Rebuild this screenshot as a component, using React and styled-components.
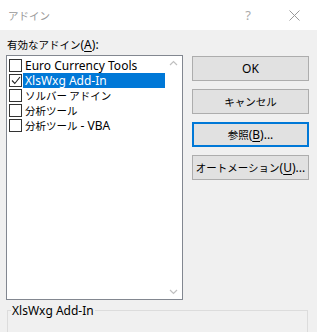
import styled, { createGlobalStyle } from "styled-components";

const Global = createGlobalStyle`
	html, body {
		margin: 0;
		padding: 0;
		background: #f0f0f0;
	}
	body {
		font-family: "Noto Sans", "Noto Sans CJK JP", sans-serif;
		font-size: 12px;
		color: #000;
	}
`

// Japanese glyphs in the original UI font are narrow, so they get a smaller size
const J = styled.span`
	font-family: "Noto Sans CJK JP", sans-serif;
	font-size: 10.5px;
`

const Dialog = styled.div`
	width: 317px;
	height: 332px;
	display: flex;
	flex-direction: column;
	overflow: hidden;
	background: #f0f0f0;
`

const TitleBar = styled.div`
	height: 30px;
	flex: none;
	background: #fff;
	display: flex;
	align-items: center;
	padding-left: 8px;
	color: #999;
	font-size: 12px;
`

const Title = styled.div`
	flex: 1;
`

const TitleButton = styled.div`
	width: 46px;
	height: 30px;
	display: flex;
	align-items: center;
	justify-content: center;
	color: #aaa;
	font-size: 13px;
`

const Body = styled.div`
	flex: 1;
	display: flex;
	flex-direction: column;
	padding: 6px 9px 0 6px;
`

const Label = styled.div`
	height: 18px;
	line-height: 18px;
	padding-left: 1px;
`

const Under = styled.span`
	text-decoration: underline;
	text-underline-offset: 2px;
`

const Main = styled.div`
	display: flex;
	gap: 9px;
	margin-top: 1px;
`

const ListBox = styled.div`
	width: 175px;
	height: 243px;
	border: 1px solid #828790;
	background: #fff;
	display: flex;
	flex: none;
`

const Items = styled.div`
	flex: 1;
	padding-top: 2px;
	padding-left: 2px;
`

const Row = styled.div`
	display: flex;
	align-items: center;
	height: 15px;
	gap: 1px;
`

const Box = styled.div`
	width: 11px;
	height: 11px;
	border: 1px solid #333;
	background: #fff;
	display: flex;
	align-items: center;
	justify-content: center;
	flex: none;
`

const ItemText = styled.div`
	flex: 1;
	height: 15px;
	line-height: 15px;
	padding-left: 2px;
	white-space: nowrap;
	background: ${p => (p.$selected ? "#0078d7" : "transparent")};
	color: ${p => (p.$selected ? "#fff" : "#000")};
`

const ScrollBar = styled.div`
	width: 17px;
	display: flex;
	flex-direction: column;
	justify-content: space-between;
	align-items: center;
	padding: 4px 0;
`

const Buttons = styled.div`
	display: flex;
	flex-direction: column;
	gap: 8px;
	padding-top: 1px;
`

const Button = styled.div`
	width: 117px;
	height: 25px;
	box-sizing: border-box;
	border: ${p => (p.$focused ? "2px solid #0078d7" : "1px solid #adadad")};
	background: #e1e1e1;
	display: flex;
	align-items: center;
	justify-content: center;
	white-space: nowrap;
`

const Group = styled.fieldset`
	margin: 2px 0 0 1px;
	padding: 0;
	width: 301px;
	height: 40px;
	border: 1px solid #dcdcdc;
	border-bottom: none;
	box-sizing: border-box;
`

const Legend = styled.legend`
	padding: 0 1px;
	margin-left: 3px;
	font-size: 12px;
`

const Check = () => (
	<svg width="10" height="9" viewBox="0 0 10 9">
		<path d="M1 4.5 L3.8 7.5 L9 1" fill="none" stroke="#222" strokeWidth="1.1" />
	</svg>
)

const Chevron = ({ up }) => (
	<svg width="9" height="6" viewBox="0 0 9 6">
		<path d={up ? "M1 5 L4.5 1.5 L8 5" : "M1 1 L4.5 4.5 L8 1"} fill="none" stroke="#c0c0c0" strokeWidth="1.2" />
	</svg>
)

const addins = [
	{ key: "euro", name: "Euro Currency Tools", checked: false },
	{ key: "xls", name: "XlsWxg Add-In", checked: true, selected: true },
	{ key: "solver", name: <J>ソルバー アドイン</J>, checked: false },
	{ key: "analysis", name: <J>分析ツール</J>, checked: false },
	{ key: "vba", name: <><J>分析ツール</J> - VBA</>, checked: false },
];

const App = () => {
	return (
		<Dialog>
			<Global />
			<TitleBar>
				<Title><J>アドイン</J></Title>
				<TitleButton>?</TitleButton>
				<TitleButton>
					<svg width="11" height="11" viewBox="0 0 11 11">
						<path d="M0.5 0.5 L10.5 10.5 M10.5 0.5 L0.5 10.5" stroke="#9a9a9a" strokeWidth="1" />
					</svg>
				</TitleButton>
			</TitleBar>
			<Body>
				<Label><J>有効なアドイン</J>(<Under>A</Under>):</Label>
				<Main>
					<ListBox>
						<Items>
							{addins.map(item => (
								<Row key={item.key}>
									<Box>{item.checked && <Check />}</Box>
									<ItemText $selected={item.selected}>{item.name}</ItemText>
								</Row>
							))}
						</Items>
						<ScrollBar>
							<Chevron up />
							<Chevron />
						</ScrollBar>
					</ListBox>
					<Buttons>
						<Button>OK</Button>
						<Button><J>キャンセル</J></Button>
						<Button $focused><J>参照</J>(<Under>B</Under>)...</Button>
						<Button><J>オートメーション</J>(<Under>U</Under>)...</Button>
					</Buttons>
				</Main>
				<Group>
					<Legend>XlsWxg Add-In</Legend>
				</Group>
			</Body>
		</Dialog>
	);
}

export default App;
